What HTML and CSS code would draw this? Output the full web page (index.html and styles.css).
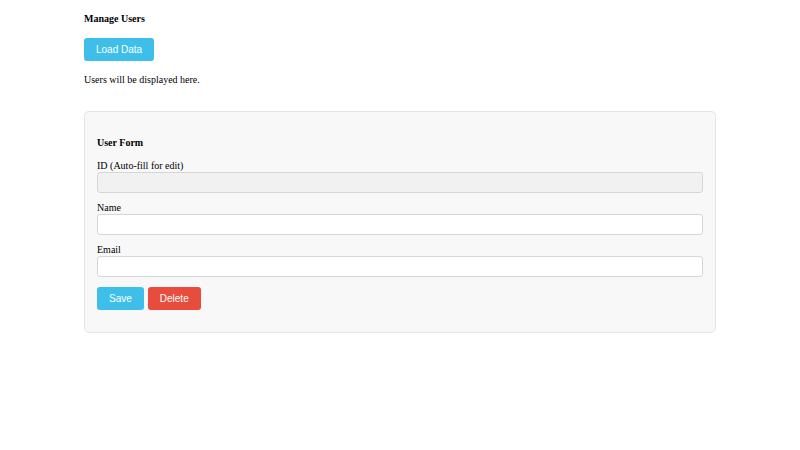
FILE: index.html
```html
<!DOCTYPE html>
<html lang="en">
<head>
    <meta charset="UTF-8">
    <meta name="viewport" content="width=device-width, initial-scale=1.0">
    <title>Manage Users</title>
    <link rel="stylesheet" href="styles.css">
</head>
<body>
    <div class="container">
        <h4 class="page-title">Manage Users</h4>

        <button class="btn btn-info">Load Data</button>

        <div id="users" class="users">Users will be displayed here.</div>

        <form class="user-form">
            <h4 class="form-title">User Form</h4>

            <label for="userId">ID (Auto-fill for edit)</label>
            <input type="text" id="userId" readonly>

            <label for="userName">Name</label>
            <input type="text" id="userName">

            <label for="userEmail">Email</label>
            <input type="email" id="userEmail">

            <div class="form-actions">
                <button type="button" class="btn btn-info">Save</button>
                <button type="button" class="btn btn-danger">Delete</button>
            </div>
        </form>
    </div>
</body>
</html>
```

FILE: styles.css
```css
body {
    font-family: "Liberation Serif", "Times New Roman", serif;
    font-size: 10px;
    margin: 0;
    color: #000;
}

.container {
    width: 632px;
    margin: 0 auto;
}

.page-title {
    font-size: 10px;
    line-height: 12px;
    margin: 13px 0 13px;
}

.btn {
    font-family: "Liberation Sans", Arial, sans-serif;
    font-size: 10px;
    line-height: 11px;
    padding: 6px 12px;
    border: none;
    border-radius: 3px;
    color: #fff;
    cursor: pointer;
}

.btn-info {
    background: #3dbfea;
}

.btn-danger {
    background: #e74c3c;
}

.users {
    line-height: 12px;
    margin: 13px 0 25px;
}

/* Form box */
.user-form {
    background: #f8f8f8;
    border: 1px solid #e4e4e4;
    border-radius: 5px;
    padding: 12px 12px 13px;
}

.form-title {
    font-size: 10px;
    line-height: 12px;
    margin: 13px 0 10px;
}

.user-form label {
    display: block;
    line-height: 12px;
    padding-top: 1px;
}

.user-form input {
    display: block;
    box-sizing: border-box;
    width: 100%;
    height: 21px;
    margin: 0 0 8px;
    border: 1px solid #d6d6d6;
    border-radius: 3px;
    background: #fff;
    font-size: 10px;
}

.user-form input[readonly] {
    background: #f1f1f1;
}

.form-actions {
    margin: 10px 0 9px;
    font-size: 0;
}

.form-actions .btn {
    margin-right: 4px;
}
```
